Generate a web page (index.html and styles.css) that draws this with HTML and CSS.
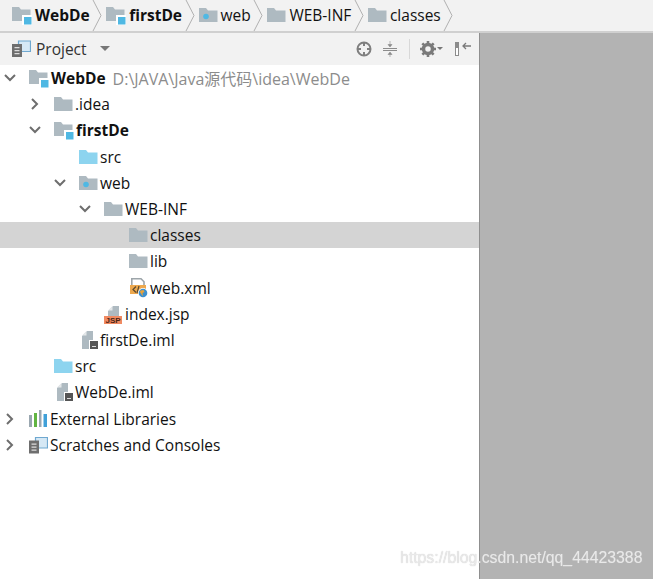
FILE: index.html
```html
<!DOCTYPE html>
<html>
<head>
  <meta name="viewport" content="width=device-width, initial-scale=1.0">
  <title>WebDe - Project</title>
  <link rel="stylesheet" href="styles.css">
</head>
<body>
  <svg class="sprite" width="0" height="0">
    <symbol id="folder" viewBox="0 0 19 16"><path d="M0 1h7l2 2.500h9.500V15H0z" fill="#aebac1"/></symbol>
    <symbol id="src" viewBox="0 0 19 16"><path d="M0 1h7l2 2.500h9.500V15H0z" fill="#8dd4ef"/></symbol>
    <symbol id="module" viewBox="0 0 20 19"><path d="M0 1h7l2 2.500h9.500V15H0z" fill="#aebac1"/><path d="M10 9h10v10H10z" fill="#fff"/><path d="M12 11h7.500v7.500H12z" fill="#4fb8e3"/></symbol>
    <symbol id="web" viewBox="0 0 19 16"><path d="M0 1h7l2 2.500h9.500V15H0z" fill="#aebac1"/><circle cx="7" cy="9.500" r="2.800" fill="#4fb8e3"/></symbol>
    <symbol id="iml" viewBox="0 0 19 20"><path d="M3 6l5-5h6v18H3z" fill="#aebac1"/><path d="M3 5.500L7.500 1v4.500z" fill="#e4e7e9"/><path d="M10 10h9v10h-9z" fill="#fff"/><path d="M11 11h8v8h-8z" fill="#555"/><path d="M13 16h4v1h-4z" fill="#ddd"/></symbol>
    <symbol id="xml" viewBox="0 0 19 20"><path d="M2.800 7V.800H12l3 3V8" fill="none" stroke="#9da5aa" stroke-width="1.600"/><path d="M1 7h16v9H1z" fill="#eda84e"/><path d="M7 8.500l-3 3 3 3M10 8l-2 7" fill="none" stroke="#5b4a30" stroke-width="1.200"/><circle cx="14" cy="15" r="5" fill="#fff"/><circle cx="14" cy="15" r="4.300" fill="#3d90cf"/><path d="M11.500 12.500l3-.5 1 2-2 1 .5 3-1.500-1.500-1.500-2.500z" fill="#e9a33a"/></symbol>
    <symbol id="libs" viewBox="0 0 19 18"><path d="M0 5h3v12H0z" fill="#9aa7b0"/><path d="M5 3h3v14H5z" fill="#62b543"/><path d="M10 0h2.500v17H10z" fill="#9aa7b0"/><path d="M14.500 4H18v13h-3.500z" fill="#40a0d8"/></symbol>
    <symbol id="panel" viewBox="0 0 19 17"><path d="M6.500 1h12v10.500h-12z" fill="#d5e8f5" stroke="#6fa8d0" stroke-width="1.200"/><path d="M0 4h10v13H0z" fill="#6e6e6e"/><path d="M2.500 7h5v1.200h-5zM2.500 10h5v1.200h-5zM2.500 13h5v1.200h-5z" fill="#ddd"/></symbol>
    <symbol id="crumb-sep" viewBox="0 0 11 31"><path d="M1 0l8 15.500L1 31" fill="none" stroke="#b0b0b0"/></symbol>
    <symbol id="open" viewBox="0 0 12 8"><path d="M1 1l5 5 5-5" fill="none" stroke="#6e6e6e" stroke-width="2"/></symbol>
    <symbol id="closed" viewBox="0 0 8 12"><path d="M1 1l5 5-5 5" fill="none" stroke="#6e6e6e" stroke-width="2"/></symbol>
  </svg>

  <nav class="crumbs">
    <span class="crumb strong"><svg class="ic-m"><use href="#module"/></svg>WebDe</span>
    <svg class="sep"><use href="#crumb-sep"/></svg>
    <span class="crumb strong"><svg class="ic-m"><use href="#module"/></svg>firstDe</span>
    <svg class="sep"><use href="#crumb-sep"/></svg>
    <span class="crumb"><svg class="ic"><use href="#web"/></svg>web</span>
    <svg class="sep"><use href="#crumb-sep"/></svg>
    <span class="crumb"><svg class="ic"><use href="#folder"/></svg>WEB-INF</span>
    <svg class="sep"><use href="#crumb-sep"/></svg>
    <span class="crumb"><svg class="ic"><use href="#folder"/></svg>classes</span>
    <svg class="sep"><use href="#crumb-sep"/></svg>
  </nav>

  <div class="main">
    <section class="project">
      <header class="toolbar">
        <svg class="ic-tool"><use href="#panel"/></svg>
        <span class="tool-title">Project</span>
        <span class="drop"></span>
        <div class="tools">
          <svg class="tool" viewBox="0 0 16 16"><circle cx="8" cy="8" r="6.500" fill="none" stroke="#7f7f7f" stroke-width="2"/><path d="M8 1v4M8 11v4M1 8h4M11 8h4" stroke="#7f7f7f" stroke-width="2"/></svg>
          <svg class="tool collapse" viewBox="0 0 14 16"><path d="M0 7.500h14M0 9.500h14" stroke="#8c8c8c"/><path d="M7 0v5M5 3.500h4L7 6zM7 16v-4M5 13.500h4L7 11z" fill="#8c8c8c" stroke="#8c8c8c" stroke-width=".6"/></svg>
          <span class="divider"></span>
          <svg class="tool gear" viewBox="0 0 16 16"><circle cx="8" cy="8" r="4.500" fill="none" stroke="#7a7a7a" stroke-width="3.500"/><path d="M8 0v16M0 8h16M2.300 2.300l11.400 11.400M13.700 2.300L2.300 13.700" stroke="#7a7a7a" stroke-width="2.600" stroke-dasharray="3 10 3"/></svg>
          <span class="drop small"></span>
          <svg class="tool hide" viewBox="0 0 16 16"><path d="M0 1h4v14H0z" fill="#8c8c8c"/><path d="M1 7h2v7H1z" fill="#fff"/><path d="M16 5H8M11 2L8 5l3 3" fill="none" stroke="#7a7a7a" stroke-width="1.300"/></svg>
        </div>
      </header>

      <ul class="tree">
        <li class="row d0"><svg class="arrow-open"><use href="#open"/></svg><svg class="ic-m"><use href="#module"/></svg><b>WebDe</b><span class="path">D:\JAVA\Java源代码\idea\WebDe</span></li>
        <li class="row d1"><svg class="arrow-closed"><use href="#closed"/></svg><svg class="ic"><use href="#folder"/></svg>.idea</li>
        <li class="row d1"><svg class="arrow-open"><use href="#open"/></svg><svg class="ic-m"><use href="#module"/></svg><b>firstDe</b></li>
        <li class="row d2 leaf"><svg class="ic"><use href="#src"/></svg>src</li>
        <li class="row d2"><svg class="arrow-open"><use href="#open"/></svg><svg class="ic"><use href="#web"/></svg>web</li>
        <li class="row d3"><svg class="arrow-open"><use href="#open"/></svg><svg class="ic"><use href="#folder"/></svg>WEB-INF</li>
        <li class="row d4 leaf selected"><svg class="ic"><use href="#folder"/></svg>classes</li>
        <li class="row d4 leaf"><svg class="ic"><use href="#folder"/></svg>lib</li>
        <li class="row d4 leaf"><svg class="ic-f"><use href="#xml"/></svg>web.xml</li>
        <li class="row d3 leaf"><svg class="ic-f" viewBox="0 0 19 20"><path d="M4 7l5-5h6v11H4z" fill="#aebac1"/><path d="M4 6.500L8.500 2v4.500z" fill="#e4e7e9"/><path d="M0 12h18v8H0z" fill="#f08a62"/><text x="9" y="18.600" text-anchor="middle" class="jsp-label">JSP</text></svg>index.jsp</li>
        <li class="row d2 leaf"><svg class="ic-f"><use href="#iml"/></svg>firstDe.iml</li>
        <li class="row d1 leaf"><svg class="ic"><use href="#src"/></svg>src</li>
        <li class="row d1 leaf"><svg class="ic-f"><use href="#iml"/></svg>WebDe.iml</li>
        <li class="row d0"><svg class="arrow-closed"><use href="#closed"/></svg><svg class="ic-f"><use href="#libs"/></svg>External Libraries</li>
        <li class="row d0"><svg class="arrow-closed"><use href="#closed"/></svg><svg class="ic-f"><use href="#panel"/></svg>Scratches and Consoles</li>
      </ul>
    </section>
    <div class="editor"></div>
  </div>

  <div class="watermark">https://blog.csdn.net/qq_44423388</div>
</body>
</html>
```

FILE: styles.css
```css
* {
  box-sizing: border-box;
}
html, body {
  height: 100%;
}
body {
  margin: 0;
  display: flex;
  flex-direction: column;
  overflow: hidden;
  background: #fff;
  color: #111;
  font-family: "Open Sans", "Noto Sans CJK SC", sans-serif;
  font-size: 15.5px;
}
.sprite {
  position: absolute;
}
.jsp-label {
  font-family: "Liberation Sans", sans-serif;
  font-size: 8px;
  font-weight: bold;
  fill: #4a2415;
}

/* breadcrumb bar */
.crumbs {
  height: 33px;
  flex: none;
  display: flex;
  align-items: center;
  padding: 0 0 1px 12px;
  background: #f2f2f2;
  border-bottom: 2px solid #d0d0d0;
}
.crumb {
  display: flex;
  align-items: center;
  gap: 3px;
}
.strong {
  font-weight: 700;
}
.sep {
  width: 11px;
  height: 31px;
  margin: 0 3px 0 2.6px;
  flex: none;
}
.ic {
  width: 19px;
  height: 16px;
  flex: none;
}
.ic-m {
  width: 20px;
  height: 19px;
  flex: none;
}
.ic-f {
  width: 19px;
  height: 20px;
  flex: none;
}

.main {
  flex: 1;
  display: flex;
  min-height: 0;
}
.project {
  width: 479px;
  flex: none;
}
.editor {
  flex: 1;
  background: #b3b3b3;
  border-left: 1px solid #8f8f8f;
}

/* tool window header */
.toolbar {
  height: 32px;
  display: flex;
  align-items: center;
  padding: 0 0 1px 12px;
  background: #f2f2f2;
}
.ic-tool {
  width: 19px;
  height: 17px;
  flex: none;
}
.tool-title {
  margin-left: 5px;
  color: #333;
}
.drop {
  width: 0;
  height: 0;
  margin-left: 13px;
  border-top: 5px solid #777;
  border-left: 5px solid transparent;
  border-right: 5px solid transparent;
}
.drop.small {
  margin-left: 1px;
  border-top-width: 3px;
  border-left-width: 3px;
  border-right-width: 3px;
}
.tools {
  margin-left: auto;
  display: flex;
  align-items: center;
  padding-right: 8px;
}
.tool {
  width: 16px;
  height: 16px;
  flex: none;
}
.collapse {
  width: 14px;
  margin-left: 11px;
}
.divider {
  width: 1px;
  height: 20px;
  margin: 0 10px 0 12px;
  background: #d8d8d8;
}
.hide {
  margin-left: 12px;
}

/* tree */
.tree {
  margin: 0;
  padding: 0;
  list-style: none;
}
.row {
  height: 26.2px;
  display: flex;
  align-items: center;
  gap: 2px;
  white-space: nowrap;
}
.row b {
  font-weight: 700;
}
.selected {
  background: #d4d4d4;
}
.d0 { padding-left: 4px; }
.d1 { padding-left: 29px; }
.d2 { padding-left: 54px; }
.d3 { padding-left: 79px; }
.d4 { padding-left: 104px; }
.leaf > svg:first-child {
  margin-left: 25px;
}
.arrow-open {
  width: 12px;
  height: 8px;
  margin-right: 11px;
  flex: none;
}
.arrow-closed {
  width: 8px;
  height: 12px;
  margin-left: 2px;
  margin-right: 13px;
  flex: none;
}
.path {
  margin-left: 5px;
  font-size: 16px;
  color: #8c8c8c;
}

.watermark {
  position: absolute;
  left: 400px;
  top: 549px;
  font-family: "Liberation Sans", sans-serif;
  font-size: 15.8px;
  color: #e9e9e9;
  text-shadow: 0 0 1px #c8c8c8;
  filter: blur(0.4px);
}
```
